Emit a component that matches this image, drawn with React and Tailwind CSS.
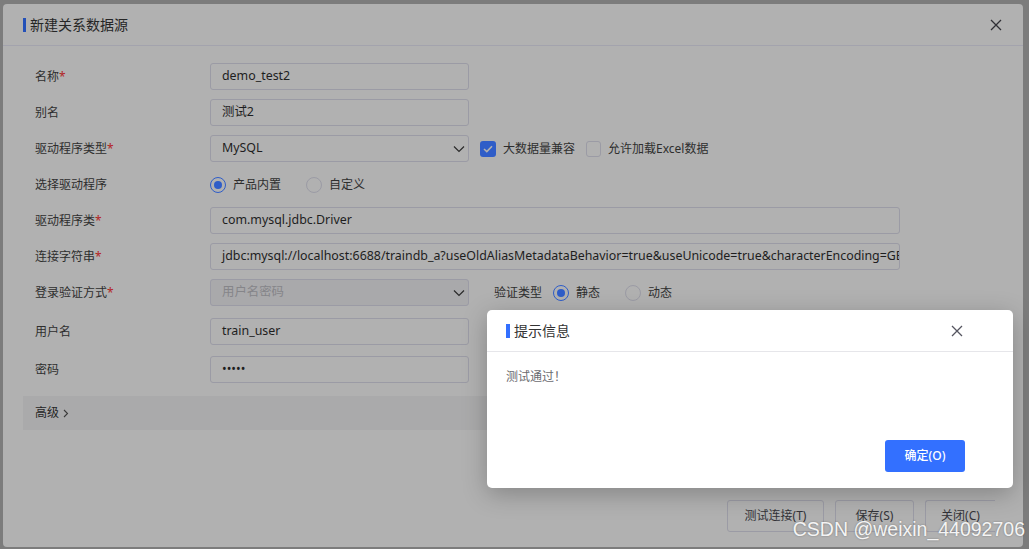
import React from 'react';

const font = { fontFamily: '"Noto Sans", "Noto Sans CJK SC", sans-serif' };

const Label = ({ text, required }) => (
    <div className="w-[175px] shrink-0 text-[12px] text-[#2e2e2e]">
        {text}
        {required && <span className="text-[#b32424]">*</span>}
    </div>
);

const Input = ({ value, wide }) => (
    <div className={`${wide ? 'w-[690px]' : 'w-[259px]'} h-[27px] border border-[#9b9ba5] rounded-[3px] flex items-center px-[11px] text-[12.4px] text-[#1e1e1e] overflow-hidden whitespace-nowrap`}>
        {value}
    </div>
);

const Chevron = () => (
    <svg width="12" height="8" viewBox="0 0 12 8" fill="none">
        <path d="M1 1.5 L6 6.5 L11 1.5" stroke="#2a2a2a" strokeWidth="1.2" />
    </svg>
);

const Select = ({ value, disabled }) => (
    <div className={`w-[259px] h-[27px] border border-[#9b9ba5] rounded-[3px] flex items-center justify-between pl-[11px] pr-[3px] text-[12.4px] ${disabled ? 'bg-[#a9a9ab] text-[#858589]' : 'text-[#1e1e1e]'}`}>
        <span>{value}</span>
        <Chevron />
    </div>
);

const Radio = ({ checked, text }) => (
    <div className="flex items-center gap-[7px]">
        {checked ? (
            <div className="w-[16px] h-[16px] rounded-full border border-[#2f5dc8] flex items-center justify-center">
                <div className="w-[8px] h-[8px] rounded-full bg-[#2f5dc8]" />
            </div>
        ) : (
            <div className="w-[16px] h-[16px] rounded-full border border-[#9b9ba5]" />
        )}
        <span className="text-[12px] text-[#2e2e2e]">{text}</span>
    </div>
);

const Checkbox = ({ checked, text }) => (
    <div className="flex items-center gap-[7px]">
        {checked ? (
            <div className="w-[16px] h-[16px] rounded-[3px] bg-[#2f5dc8] flex items-center justify-center">
                <svg width="10" height="8" viewBox="0 0 10 8" fill="none">
                    <path d="M1 4 L3.8 6.6 L9 1.2" stroke="#b1b1b1" strokeWidth="1.6" />
                </svg>
            </div>
        ) : (
            <div className="w-[15px] h-[16px] rounded-[3px] border border-[#9b9ba5]" />
        )}
        <span className="text-[12px] text-[#2e2e2e]">{text}</span>
    </div>
);

const CloseX = ({ color }) => (
    <svg width="12" height="12" viewBox="0 0 12 12" fill="none">
        <path d="M1 1 L11 11 M11 1 L1 11" stroke={color} strokeWidth="1.3" />
    </svg>
);

const App = () => {
    return (
        <div className="w-[1029px] h-[549px] bg-[#7c7c7c] relative overflow-hidden" style={font}>
            {/* main dialog */}
            <div className="absolute left-[3px] top-[4px] w-[1020px] h-[543px] bg-[#b1b1b1] rounded-[4px] flex flex-col">
                <div className="h-[42px] shrink-0 border-b border-[#a3a3ad] flex items-center justify-between pl-[20px] pr-[21px]">
                    <div className="flex items-center gap-[4px]">
                        <div className="w-[3px] h-[14px] bg-[#2350b8]" />
                        <span className="text-[14px] text-[#262626]">新建关系数据源</span>
                    </div>
                    <CloseX color="#2f2f35" />
                </div>

                <div className="pl-[32px] pt-[17px] flex flex-col">
                    <div className="flex items-center h-[27px]">
                        <Label text="名称" required />
                        <Input value="demo_test2" />
                    </div>
                    <div className="flex items-center h-[27px] mt-[9px]">
                        <Label text="别名" />
                        <Input value="测试2" />
                    </div>
                    <div className="flex items-center h-[27px] mt-[9px]">
                        <Label text="驱动程序类型" required />
                        <Select value="MySQL" />
                        <div className="ml-[11px] flex items-center gap-[11px]">
                            <Checkbox checked text="大数据量兼容" />
                            <Checkbox text="允许加载Excel数据" />
                        </div>
                    </div>
                    <div className="flex items-center h-[27px] mt-[9px]">
                        <Label text="选择驱动程序" />
                        <div className="flex items-center gap-[25px]">
                            <Radio checked text="产品内置" />
                            <Radio text="自定义" />
                        </div>
                    </div>
                    <div className="flex items-center h-[27px] mt-[9px]">
                        <Label text="驱动程序类" required />
                        <Input value="com.mysql.jdbc.Driver" wide />
                    </div>
                    <div className="flex items-center h-[27px] mt-[9px]">
                        <Label text="连接字符串" required />
                        <Input value="jdbc:mysql://localhost:6688/traindb_a?useOldAliasMetadataBehavior=true&useUnicode=true&characterEncoding=GBK" wide />
                    </div>
                    <div className="flex items-center h-[27px] mt-[9px]">
                        <Label text="登录验证方式" required />
                        <Select value="用户名密码" disabled />
                        <span className="ml-[25px] text-[12px] text-[#2e2e2e]">验证类型</span>
                        <div className="ml-[11px] flex items-center gap-[25px]">
                            <Radio checked text="静态" />
                            <Radio text="动态" />
                        </div>
                    </div>
                    <div className="flex items-center h-[27px] mt-[12px]">
                        <Label text="用户名" />
                        <Input value="train_user" />
                    </div>
                    <div className="flex items-center h-[27px] mt-[11px]">
                        <Label text="密码" />
                        <Input value="•••••" />
                    </div>
                </div>

                <div className="mt-[13px] ml-[20px] mr-[18px] h-[34px] bg-[#aaaaab] flex items-center pl-[12px] gap-[4px]">
                    <span className="text-[12px] text-[#262626]">高级</span>
                    <svg width="6" height="9" viewBox="0 0 6 9" fill="none">
                        <path d="M1 1 L4.5 4.5 L1 8" stroke="#3a3a3a" strokeWidth="1.1" />
                    </svg>
                </div>

                <div className="flex-1" />
                <div className="flex justify-end gap-[11px] pr-[28px] pb-[15px]">
                    <div className="w-[97px] h-[32px] border border-[#9b9ba5] rounded-[3px] flex items-center justify-center text-[12px] text-[#333338]">测试连接(T)</div>
                    <div className="w-[79px] h-[32px] border border-[#9b9ba5] rounded-[3px] flex items-center justify-center text-[12px] text-[#333338]">保存(S)</div>
                    <div className="w-[70px] h-[32px] border border-r-0 border-[#9b9ba5] rounded-l-[3px] flex items-center justify-center text-[12px] text-[#333338]">关闭(C)</div>
                </div>
            </div>

            {/* message box */}
            <div className="absolute left-[487px] top-[310px] w-[526px] h-[178px] bg-white rounded-[5px] shadow-[0_6px_24px_rgba(0,0,0,0.25)] flex flex-col">
                <div className="h-[42px] border-b border-[#e6e6ea] flex items-center justify-between pl-[19px] pr-[50px]">
                    <div className="flex items-center gap-[4px]">
                        <div className="w-[4px] h-[14px] bg-[#3370ff]" />
                        <span className="text-[14px] text-[#333333]">提示信息</span>
                    </div>
                    <CloseX color="#555560" />
                </div>
                <div className="pl-[19px] pt-[16px] text-[12px] text-[#6b6b70]">测试通过！</div>
                <div className="flex-1" />
                <div className="flex justify-end pr-[48px] pb-[16px]">
                    <div className="w-[80px] h-[32px] bg-[#3370ff] rounded-[3px] flex items-center justify-center text-[12px] font-medium text-white">确定(O)</div>
                </div>
            </div>

            {/* watermark */}
            <div className="absolute right-[4px] top-[515px] text-[19.5px] text-[#f4f4f4] [text-shadow:0_0_2px_rgba(0,0,0,0.35)]" style={{ fontFamily: '"Liberation Sans", Arial, sans-serif' }}>
                CSDN @weixin_44092706
            </div>
        </div>
    );
};

export default App;
